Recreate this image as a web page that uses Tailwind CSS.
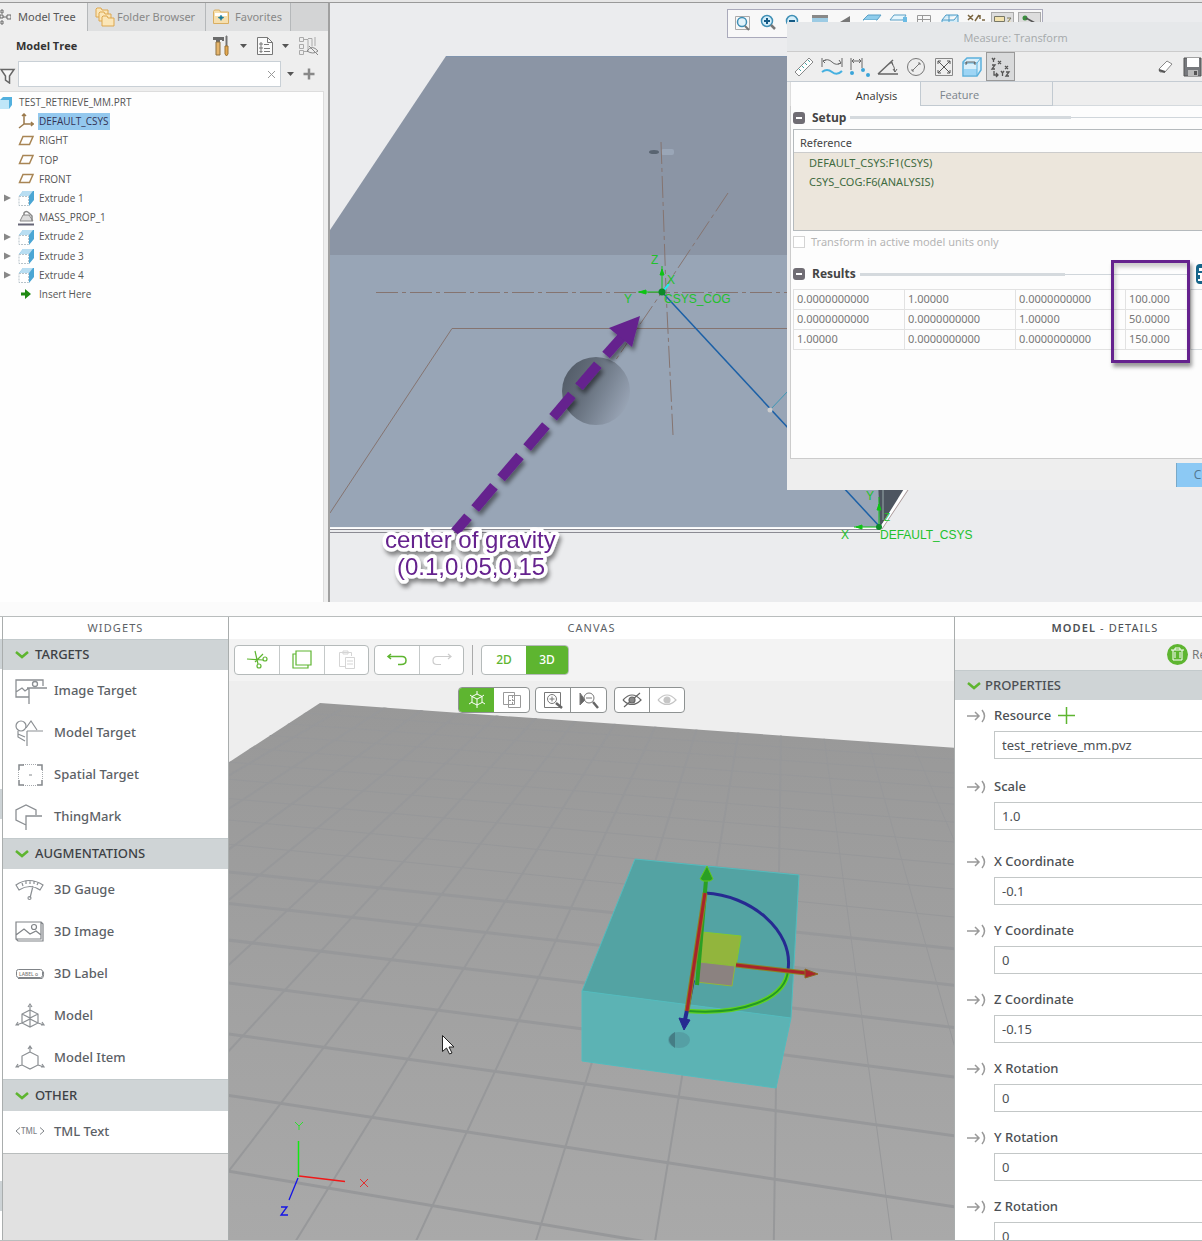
<!DOCTYPE html>
<html lang="en">
<head>
<meta charset="utf-8">
<title>Measure and place model</title>
<script src="https://cdn.jsdelivr.net/npm/@tailwindcss/browser@4"></script>
</head>
<body class="flex h-screen flex-col overflow-hidden bg-[#fbfbfb] font-['Open_Sans',sans-serif] text-[#444]">

<!-- CAD window -->
<section class="flex h-[602px] shrink-0 border-t-2 border-[#e6e6e6]">
  <aside class="flex w-[330px] shrink-0 flex-col border-t border-r-2 border-t-[#999] border-r-[#a0a0a0] bg-[#eee]">
    <div class="flex h-7 shrink-0 bg-[#d3d4d5] font-['Noto_Sans',sans-serif] text-[11px] text-[#888]">
      <button class="flex w-[87px] items-center gap-[7px] bg-[#eee] text-[#555] whitespace-nowrap">
        <svg width="11" height="16" viewBox="0 0 11 16" fill="none" stroke="#666"><path d="M1 1h2v3H1zM1 12h2v3H1zM0 6h3v3H0zM7 6h4v4H7zM3 8h4"/></svg>Model Tree</button>
      <button class="flex w-[119px] items-center gap-0.5 border-x border-[#b5b8ba] bg-[#dfe0e1] pl-[7px] whitespace-nowrap">
        <svg class="shrink-0" width="20" height="20" viewBox="0 0 20 20" fill="#fbe6b8" stroke="#dda74f"><path d="M1 2l1-1h4l1 2h6v7H1z"/><path d="M4 6l1-1h4l1 2h6v7H4z"/><path d="M7 10l1-1h4l1 2h6v8H7z"/></svg>Folder Browser</button>
      <button class="flex w-[85px] items-center gap-1.5 border-r border-[#b5b8ba] bg-[#dfe0e1] pl-[7px] whitespace-nowrap">
        <svg class="shrink-0" width="16" height="16" viewBox="0 0 16 16"><path d="M.5 2.500l1-1.500h5l1 2h8v11.500H.5z" fill="#f6dfae" stroke="#d9ae62"/><path d="M2 4h12v3H2z" fill="#fff"/><path d="M8 6l1 2 2 .5-2 1-1 2-1-2-2-1 2-.5z" fill="#157a9e" stroke="#157a9e" stroke-width=".5"/></svg>Favorites</button>
    </div>
    <div class="flex h-[30px] shrink-0 items-center gap-1 pr-2 pl-4 text-[11px] font-bold">
      <h2 class="flex-1 text-[#333]">Model Tree</h2>
      <button aria-label="Settings"><svg width="20" height="22" viewBox="0 0 20 22"><path d="M1 2h11v4h-2V5H8v2H4V5H1z" fill="#6b6b6b"/><path d="M4 7h4v13H4z" fill="#e5b46b" stroke="#8d7141"/><path d="M14 1h1v10h-1z" fill="#666" stroke="#777"/><path d="M13 11h3v8l-1.500 2-1.500-2z" fill="#e5a94f" stroke="#9b7336"/></svg></button>
      <svg class="mx-1" width="8" height="5"><path d="M0 0h7L3.500 4z" fill="#555"/></svg>
      <button aria-label="Show"><svg width="18" height="20" viewBox="0 0 18 20" fill="none" stroke="#777"><path d="M1.500 1.500h10l5 5v12h-15z" fill="#fafafa"/><path d="M11.500 1.500v5h5M4 7h2v2H4zM4 11h2v2H4zM4 15h2v1H4zM8 8.500h5M8 12.500h6M8 15.500h6"/></svg></button>
      <svg class="mx-1" width="8" height="5"><path d="M0 0h7L3.500 4z" fill="#555"/></svg>
      <button aria-label="Hide"><svg width="22" height="20" viewBox="0 0 22 20" fill="none" stroke="#aaa"><path d="M1.500 1.500h4v4h-4zM1.500 8.500h4v4h-4zM1.500 14.500h4v4h-4zM6 3.500h4v12H6M10 2.500h4v8M17 1v9"/><path d="M9 15q5-7 11 0-5 4-11 0M11 10l9 9" stroke="#888"/></svg></button>
    </div>
    <form class="flex h-[30px] shrink-0 items-center">
      <svg width="18" height="16" viewBox="0 0 18 16"><path d="M1 1.500h13L9.500 8v7l-4-3V8z" fill="#f7f7f7" stroke="#666" stroke-width="1.500"/></svg>
      <label class="mt-[-4px] flex h-[26px] w-[263px] items-center border border-[#c9d0d6] bg-white pr-1"><input aria-label="Filter" class="min-w-0 flex-1 bg-transparent px-1 text-[11px] outline-none"><svg width="9" height="9" stroke="#999"><path d="M1 1l7 7M8 1L1 8"/></svg></label>
      <svg class="mb-1 ml-1.5" width="8" height="5"><path d="M0 0h7L3.500 4z" fill="#555"/></svg>
      <svg class="mb-1 ml-2" width="12" height="12" stroke="#888" stroke-width="2.500"><path d="M6 .5v11M.5 6h11"/></svg>
    </form>
    <div class="mr-1 flex-1 border-t border-r border-[#ddd] bg-[#fefefe]">
      <ul id="tree" class="mt-px grid h-[211px] auto-rows-fr text-[10px] text-[#555]">
        <li class="flex items-center"><svg width="13" height="14" viewBox="0 0 13 14"><path d="M0 4l3-3h9v8l-3 4H0z" fill="#52b0de"/><path d="M0 4h9v9H0z" fill="#bfe6f8"/></svg><span class="ml-1.5">TEST_RETRIEVE_MM.PRT</span></li>
        <li class="flex items-center pl-[18px]"><svg width="17" height="17" viewBox="0 0 17 17" fill="none" stroke="#9b7a4c" stroke-width="1.500"><path d="M6 2v9h10M6 11l-5 4M4 3l2-2 2 2M13 9l2 2-2 2"/></svg><span class="ml-[3px] bg-[#93c8ee] px-px leading-[17px] text-[#335]">DEFAULT_CSYS</span></li>
        <li class="flex items-center pl-[18px]"><svg width="17" height="12" viewBox="0 0 17 12" fill="none" stroke="#a88554" stroke-width="1.500"><path d="M5 1.500h10l-3.500 8H1.500z"/></svg><span class="ml-1">RIGHT</span></li>
        <li class="flex items-center pl-[18px]"><svg width="17" height="12" viewBox="0 0 17 12" fill="none" stroke="#a88554" stroke-width="1.500"><path d="M5 1.500h10l-3.500 8H1.500z"/></svg><span class="ml-1">TOP</span></li>
        <li class="flex items-center pl-[18px]"><svg width="17" height="12" viewBox="0 0 17 12" fill="none" stroke="#a88554" stroke-width="1.500"><path d="M5 1.500h10l-3.500 8H1.500z"/></svg><span class="ml-1">FRONT</span></li>
        <li class="flex items-center pl-1"><svg width="31" height="16" viewBox="0 0 31 16"><path d="M0 4.500l7 3.500-7 3.500z" fill="#888"/><path d="M19 1h11v9l-5 6V6H15z" fill="#4ba6d4"/><path d="M19 1h10l-4 5H15z" fill="#b9def2"/><path d="M15 6.500h9.500v9H15z" fill="#fff" stroke="#b7c3ca" stroke-dasharray="2 1"/></svg><span class="ml-1">Extrude 1</span></li>
        <li class="flex items-center pl-[18px]"><svg width="17" height="16" viewBox="0 0 17 16"><path d="M2 11L5 5h6l4 6z" fill="#ddd" stroke="#888"/><path d="M6 5V3q2-3 5 0l3 3v5" fill="none" stroke="#888" stroke-width="1.500"/><path d="M0 14.500h16" stroke="#667" stroke-width="2"/></svg><span class="ml-1">MASS_PROP_1</span></li>
        <li class="flex items-center pl-1"><svg width="31" height="16" viewBox="0 0 31 16"><path d="M0 4.500l7 3.500-7 3.500z" fill="#888"/><path d="M19 1h11v9l-5 6V6H15z" fill="#4ba6d4"/><path d="M19 1h10l-4 5H15z" fill="#b9def2"/><path d="M15 6.500h9.500v9H15z" fill="#fff" stroke="#b7c3ca" stroke-dasharray="2 1"/></svg><span class="ml-1">Extrude 2</span></li>
        <li class="flex items-center pl-1"><svg width="31" height="16" viewBox="0 0 31 16"><path d="M0 4.500l7 3.500-7 3.500z" fill="#888"/><path d="M19 1h11v9l-5 6V6H15z" fill="#4ba6d4"/><path d="M19 1h10l-4 5H15z" fill="#b9def2"/><path d="M15 6.500h9.500v9H15z" fill="#fff" stroke="#b7c3ca" stroke-dasharray="2 1"/></svg><span class="ml-1">Extrude 3</span></li>
        <li class="flex items-center pl-1"><svg width="31" height="16" viewBox="0 0 31 16"><path d="M0 4.500l7 3.500-7 3.500z" fill="#888"/><path d="M19 1h11v9l-5 6V6H15z" fill="#4ba6d4"/><path d="M19 1h10l-4 5H15z" fill="#b9def2"/><path d="M15 6.500h9.500v9H15z" fill="#fff" stroke="#b7c3ca" stroke-dasharray="2 1"/></svg><span class="ml-1">Extrude 4</span></li>
        <li class="flex items-center pl-[18px]"><svg width="17" height="12" viewBox="0 0 17 12"><path d="M3 4.500h4V1l6 5-6 5V7.500H3z" fill="#1f8a12"/></svg><span class="ml-1">Insert Here</span></li>
      </ul>
    </div>
  </aside>

  <main class="relative min-w-0 flex-1 border-t border-[#999] bg-[#ebecee]">
    <svg class="absolute inset-0 h-full w-full" viewBox="330 3 872 599" preserveAspectRatio="xMinYMin slice" font-family="Liberation Sans, sans-serif">
      <defs>
        <linearGradient id="hole" x1="0" y1="0.200" x2="1" y2="0.700"><stop offset="0" stop-color="#515a66"/><stop offset="0.400" stop-color="#66707d"/><stop offset="1" stop-color="#9aa6b7"/></linearGradient>
        <filter id="drop" x="-20%" y="-20%" width="140%" height="150%"><feDropShadow dx="2" dy="4" stdDeviation="2" flood-color="#000" flood-opacity="0.450"/></filter>
      </defs>
      <path d="M330 230L446 56H800V256H330z" fill="#8b95a5"/>
      <path d="M330 255H800V420L880 490V527H330z" fill="#98a5b6"/>
      <path d="M446 56.500H800" stroke="#8094ad"/>
      <path d="M878 480h34l-32 47z" fill="#4d5560"/><path d="M883 480v40" stroke="#9aa"/><path d="M910 482l-28 45" stroke="#fff" stroke-width="3"/><path d="M912 484l-30 45" stroke="#a99"/>
      <path d="M330 528.500H880" stroke="#fff" stroke-width="2"/><path d="M330 529.500H880M330 532.500H880" stroke="#8b8b93"/>
      <ellipse cx="654" cy="152" rx="5" ry="2" fill="#596471"/><rect x="661" y="149" width="13" height="6" rx="2" fill="#9aa6b7"/>
      <g fill="none" stroke="#857470">
        <path d="M330 513L452 328.500H790" />
        <path d="M661 142L666 290L673 435M376 292.500H790" stroke-dasharray="22 4 4 4"/>
        <path d="M728 193L662 292L600 383" stroke-dasharray="22 4 4 4"/>
      </g>
      <circle cx="596" cy="391" r="34" fill="url(#hole)"/>
      <path d="M662 292L880 527" stroke="#1c60a6" stroke-width="1.500"/><path d="M770 410l18-19" stroke="#3c97b5"/><circle cx="770" cy="410" r="2.500" fill="#ccc"/>
      <g stroke="#0ec414" fill="#0ec414"><path d="M662 292V266M662 292H638M879 527V497M879 527H854"/><path d="M660 275l2-6 2 6zM646 290l-7 2 7 2zM877 510l2-6 2 6zM862 525l-6 2 6 2z"/></g>
      <path d="M664 290l5-6" stroke="#2ee" stroke-width="2"/><circle cx="662" cy="292" r="3.500" fill="#0c8a28"/><circle cx="879" cy="527" r="3" fill="#0c8a28"/>
      <g fill="#22c12c" font-size="12"><text x="651" y="264">Z</text><text x="667" y="284">X</text><text x="624" y="303">Y</text><text x="866" y="500">Y</text><text x="884" y="521" font-size="10">Z</text><text x="841" y="539">X</text><text x="664" y="303">CSYS_COG</text><text x="880" y="539">DEFAULT_CSYS</text></g>
      <g filter="url(#drop)"><path d="M455 532L601 361" stroke="#65228e" stroke-width="10" stroke-dasharray="29 11" stroke-dashoffset="9" fill="none"/><path d="M606 355L622 337" stroke="#65228e" stroke-width="10"/><path d="M640 316L609 328L632 347z" fill="#65228e"/></g>
      <g filter="url(#drop)" font-size="24" fill="#65228e" stroke="#fff" stroke-width="7" stroke-linejoin="round" paint-order="stroke"><text x="385" y="548">center of gravity</text><text x="397" y="575">(0.1,0,05,0,15</text></g>
    </svg>

    <div role="toolbar" aria-label="View" class="absolute top-1.5 left-[397px] flex h-[29px] w-[316px] items-start gap-1 border border-[#aab] bg-[#f8f8f8] pt-0.5 pl-[3px]">
      <button aria-label="Refit" class="size-[22px]"><svg width="22" height="22" viewBox="0 0 22 22" fill="none"><path d="M4.500 4.500h14v13h-14z" stroke="#aaa"/><circle cx="11" cy="10" r="4.500" fill="#e2f3fb" stroke="#3f8fb5" stroke-width="1.500"/><path d="M14 14l4 4" stroke="#777" stroke-width="2"/></svg></button>
      <button aria-label="Zoom in" class="size-[22px]"><svg width="22" height="22" viewBox="0 0 22 22" fill="none"><circle cx="10" cy="9" r="5.500" fill="#d6effa" stroke="#3f8fb5" stroke-width="1.500"/><path d="M10 6v6M7 9h6" stroke="#145a85" stroke-width="2"/><path d="M14 13l4 4" stroke="#777" stroke-width="2.500"/></svg></button>
      <button aria-label="Zoom out" class="size-[22px]"><svg width="22" height="22" viewBox="0 0 22 22" fill="none"><circle cx="9" cy="9" r="5.500" fill="#d6effa" stroke="#3f8fb5" stroke-width="1.500"/><path d="M6 9h6" stroke="#145a85" stroke-width="2"/></svg></button>
      <button aria-label="Repaint" class="size-[22px]"><svg width="22" height="22" viewBox="0 0 22 22"><path d="M3 4h16v13H3z" fill="#9ccbe4"/><path d="M3 3h16v3H3z" fill="#888"/></svg></button>
      <button aria-label="Rendering" class="size-[22px]"><svg width="22" height="22" viewBox="0 0 22 22"><path d="M5 10L15 4v12z" fill="#777"/></svg></button>
      <button aria-label="Style" class="size-[22px]"><svg width="22" height="22" viewBox="0 0 22 22"><path d="M7 3h13l-4 5H2z" fill="#8fcdec" stroke="#5ba0c6"/><path d="M3 8h12v9H3z" fill="#fff"/></svg></button>
      <button aria-label="Saved views" class="size-[22px]"><svg width="22" height="22" viewBox="0 0 22 22"><path d="M7 3h12l-3 5H3z" fill="#e6f6fd" stroke="#5ba0c6"/><path d="M16 5h4v8h-4z" fill="#6bbbe4"/></svg></button>
      <button aria-label="Manager" class="size-[22px]"><svg width="22" height="22" viewBox="0 0 22 22" fill="none" stroke="#999"><path d="M4.500 3.500h13v13h-13zM4 7.500h13M9.500 3v12"/></svg></button>
      <button aria-label="Perspective" class="size-[22px]"><svg width="22" height="22" viewBox="0 0 22 22" fill="#d3ecf8" stroke="#4b9ac6"><path d="M7 3h12v8l-4 5H3V8zM3 8h12l4-5M10 3v8"/></svg></button>
      <button aria-label="Datum filters" class="size-[22px]"><svg width="22" height="22" viewBox="0 0 22 22" fill="none" stroke="#7a6540" stroke-width="1.500"><path d="M3 3l5 5M8 3L3 8M10 9l4-6M15 3v4M17 8h3"/></svg></button>
      <button aria-label="Annotations" class="size-[23px] border border-[#aaa] bg-[#ddd]"><svg width="22" height="22" viewBox="0 0 22 22" fill="#f2e2ae" stroke="#776"><path d="M2.500 3.500h10v5h-10zM15 5h4l-4 5h5"/></svg></button>
      <button aria-label="Spin center" class="size-[23px] border border-[#aaa] bg-[#ddd]"><svg width="22" height="22" viewBox="0 0 22 22"><circle cx="6" cy="5" r="2.500" fill="#3a8d3d"/><path d="M7 5l9 5" stroke="#555" stroke-width="1.500"/></svg></button>
    </div>

    <!-- Measure dialog, partly outside the right edge -->
    <section role="dialog" aria-label="Measure: Transform" class="absolute top-[19px] right-0 left-[457px] flex h-[468px] flex-col overflow-hidden bg-[#eee] text-[12px]">
      <h2 class="flex h-[30px] shrink-0 items-center justify-center border-b border-[#ccc] bg-[#e6e8ea] pt-1 pl-[42px] text-[11px] text-[#a5a8aa]">Measure: Transform</h2>
      <div class="flex h-[30px] shrink-0 items-center border-b border-[#c5ccd3] pl-[3px]">
        <button aria-label="Summary" class="flex h-7 w-7 items-center justify-center"><svg width="20" height="20" viewBox="0 0 20 20" fill="#fff" stroke="#888"><path d="M1 15L15 1l4 4L5 19z"/><path d="M5 12l2 2M8 9l2 2M11 6l2 2M14 3l2 2" stroke="#4aa"/></svg></button>
        <button aria-label="Length" class="flex h-7 w-7 items-center justify-center"><svg width="22" height="20" viewBox="0 0 22 20" fill="none"><path d="M1 1v9M21 1v9M2 4q5-3 9 1t9 1M2 4l3-1M2 4l2 2M20 6l-2-3M20 6l-3 1" stroke="#666"/><path d="M1 15q5-4 10 0t10-1" stroke="#45b0e0" stroke-width="2"/></svg></button>
        <button aria-label="Distance" class="flex h-7 w-7 items-center justify-center"><svg width="22" height="20" viewBox="0 0 22 20"><path d="M2 1v12M13 1v10M3 4h9M5 2L3 4l2 2M10 2l2 2-2 2" stroke="#666" fill="none"/><g fill="#3ba4d8"><circle cx="3" cy="16" r="2"/><circle cx="14" cy="13" r="2"/><circle cx="19" cy="18" r="2"/></g></svg></button>
        <button aria-label="Angle" class="flex h-7 w-7 items-center justify-center"><svg width="22" height="20" viewBox="0 0 22 20" fill="none" stroke="#666"><path d="M1 17h20M1 17L16 3" stroke-width="1.500"/><path d="M14 5q4 5 4 10M12 7l3-2 1 3M16 12l2 3 2-3"/></svg></button>
        <button aria-label="Diameter" class="flex h-7 w-7 items-center justify-center"><svg width="20" height="20" viewBox="0 0 20 20" fill="none" stroke="#777"><circle cx="10" cy="10" r="8.500"/><path d="M6 14l8-8M6 12v2h2M12 6h2v2"/></svg></button>
        <button aria-label="Area" class="flex h-7 w-7 items-center justify-center"><svg width="20" height="20" viewBox="0 0 20 20" fill="none" stroke="#555"><path d="M1.500 1.500h17v17h-17z" stroke="#888"/><path d="M4 4l12 12M16 4L4 16M4 7V4h3M13 4h3v3M16 13v3h-3M7 16H4v-3"/></svg></button>
        <button aria-label="Volume" class="flex h-7 w-7 items-center justify-center"><svg width="20" height="20" viewBox="0 0 20 20"><path d="M5 1h14v12l-4 6H1V5z" fill="#d9effa" stroke="#5bb0dc" stroke-width="1.500"/><path d="M2 12h13v6H2z" fill="#9dd5f5"/><path d="M1 6h14l4-5M15 6v13" fill="none" stroke="#5bb0dc"/><path d="M4 8V5h9v3M4 5l1 2M13 5l-1 2" fill="none" stroke="#666"/></svg></button>
        <button aria-label="Transform" class="flex h-[29px] w-[29px] items-center justify-center border border-[#999] bg-[#d9dadb]"><svg width="22" height="22" viewBox="0 0 22 22" fill="none" stroke="#555" stroke-width="1.300"><path d="M2 2l1.500 2L5 2M3.500 4v2M8 5l3 3M11 5L8 8M2 9h3l-3 4h3M4 15v4h4M6 17l2 2-2 2M11 15l1.500 2L14 15M12.500 17v3M15 10l3 3M18 10l-3 3M16 16h3l-3 4h3"/></svg></button>
        <span class="flex-1"></span>
        <button aria-label="Clear"><svg width="18" height="16" viewBox="0 0 18 16"><path d="M3 10L11 2l5 3-7 8H4z" fill="#fff" stroke="#888"/><path d="M3 11l6 2" stroke="#555" stroke-width="2"/></svg></button>
        <button aria-label="Save" class="ml-[9px]"><svg width="19" height="20" viewBox="0 0 19 20"><path d="M1 1h17v18H1z" fill="#77797d" stroke="#555"/><path d="M4 1h12v9H4z" fill="#fff"/><path d="M5 13h10v6H5z" fill="#bbb"/><path d="M11 14h3v4h-3z" fill="#555"/></svg></button>
      </div>
      <div role="tablist" class="ml-[3px] flex h-6 shrink-0 border-l border-[#ddd]">
        <button role="tab" class="w-[129px] bg-[#fdfdfd] pt-1 pl-[42px] text-[11px] text-[#333]">Analysis</button>
        <button role="tab" class="w-[133px] border-x border-b border-[#c2cad1] pt-1 pr-[54px] text-[11px] text-[#7a838b]">Feature</button>
        <span class="flex-1 border-b border-[#d5dade]"></span>
      </div>
      <div class="ml-[3px] flex flex-1 flex-col border-b border-l border-[#ccc] bg-[#fdfdfd] pl-0.5 font-['Noto_Sans',sans-serif]">
        <div class="flex h-[23px] items-center"><span class="flex h-3 w-3 items-center justify-center rounded-[3px] bg-[#706d74]"><span class="h-0.5 w-1.5 bg-white"></span></span><h3 class="ml-[7px] font-['Open_Sans',sans-serif] text-[12px] font-bold text-[#444]">Setup</h3><span class="ml-1 h-[3px] w-[221px] bg-[#d5dade]"></span><span class="h-px flex-1 bg-[#d0d6db]"></span></div>
        <div class="h-[102px] shrink-0 border border-r-0 border-[#b5babd]">
          <h4 class="flex h-[23px] items-center border-b border-[#ccc] pt-1 pl-1.5 text-[11px] text-[#444]">Reference</h4>
          <ul class="h-[77px] bg-[#ece6dc] pl-[15px] text-[11px] leading-[19px] text-[#3f6b3f]"><li>DEFAULT_CSYS:F1(CSYS)</li><li>CSYS_COG:F6(ANALYSIS)</li></ul>
        </div>
        <label class="flex h-[22px] items-center gap-1.5 text-[11px] text-[#b5b5b5]"><input type="checkbox" disabled class="size-3 appearance-none border border-[#d4d4d4] bg-white">Transform in active model units only</label>
        <div class="mt-1.5 flex h-[30px] items-center"><span class="flex h-3 w-3 items-center justify-center rounded-[3px] bg-[#706d74]"><span class="h-0.5 w-1.5 bg-white"></span></span><h3 class="ml-[7px] font-['Open_Sans',sans-serif] text-[12px] font-bold text-[#444]">Results</h3><span class="ml-1 h-[3px] w-[205px] bg-[#d5dade]"></span><span class="h-px flex-1 bg-[#d0d6db]"></span><button aria-label="Information" class="ml-1.5 flex h-5 w-1.5 shrink-0 items-center justify-end rounded-l bg-[#15658a]"><svg width="4" height="14"><path d="M1 1h3v3H1zM0 6h4v2H0zM2 6h2v7H2zM0 12h4v2H0z" fill="#fff"/></svg></button></div>
        <table class="w-full table-fixed border-collapse border border-r-0 border-[#d5dade] text-[11px] text-[#777]">
          <colgroup><col class="w-[111px]"><col class="w-[111px]"><col class="w-[110px]"><col class="w-[65px]"><col></colgroup>
          <tr class="h-5"><td class="border border-[#e2e2e2] pl-[3px]">0.0000000000</td><td class="border border-[#e2e2e2] pl-[3px]">1.00000</td><td class="border border-[#e2e2e2] pl-[3px]">0.0000000000</td><td class="border border-[#e2e2e2] pl-[3px]">100.000</td><td></td></tr>
          <tr class="h-5"><td class="border border-[#e2e2e2] pl-[3px]">0.0000000000</td><td class="border border-[#e2e2e2] pl-[3px]">0.0000000000</td><td class="border border-[#e2e2e2] pl-[3px]">1.00000</td><td class="border border-[#e2e2e2] pl-[3px]">50.0000</td><td></td></tr>
          <tr class="h-5"><td class="border border-[#e2e2e2] pl-[3px]">1.00000</td><td class="border border-[#e2e2e2] pl-[3px]">0.0000000000</td><td class="border border-[#e2e2e2] pl-[3px]">0.0000000000</td><td class="border border-[#e2e2e2] pl-[3px]">150.000</td><td></td></tr>
        </table>
      </div>
      <footer class="flex h-[31px] shrink-0 items-center justify-end"><button class="h-6 w-[26px] border-l border-[#79a9c8] bg-[#8cc9f4] pl-4 text-[12px] text-[#52768f]">C</button></footer>
      <div class="absolute top-[238px] left-[324px] h-[103px] w-[79px] border-[3px] border-[#65228e] shadow-[2px_4px_4px_rgba(0,0,0,0.4),inset_2px_4px_4px_rgba(0,0,0,0.2)]"></div>
    </section>
  </main>
</section>

<!-- Experience editor -->
<section class="mt-3.5 flex min-h-0 flex-1 border-y border-[#b9bdbd] font-['Noto_Sans',sans-serif]">
  <div class="flex w-0.5 shrink-0 flex-col bg-white"><span class="mt-[22px] h-[30px] bg-[#cdd3d6]"></span><span class="mt-[120px] h-[30px] bg-[#cdd3d6]"></span><span class="mt-[362px] h-[30px] bg-[#cdd3d6]"></span></div>
  <nav class="flex w-[227px] shrink-0 flex-col border-x border-[#a9adad] bg-[#e1e1e1] text-[13px] font-medium text-[#5c6166]">
    <h2 class="flex h-[22px] shrink-0 items-center justify-center bg-white text-[11px] font-normal tracking-widest">WIDGETS</h2>
    <h3 class="flex h-[31px] shrink-0 items-center gap-1.5 border-t border-[#c3cacc] bg-[#cfd4d6] pl-3 text-[#3d4145]"><svg width="14" height="8" fill="none" stroke="#5eb530" stroke-width="2.500"><path d="M1 1l6 5 6-5"/></svg>TARGETS</h3>
    <ul class="bg-white">
      <li class="flex h-[42px] items-center gap-[6px] pl-3"><svg width="33" height="28" viewBox="0 0 33 28" fill="none" stroke="#8b8f93" stroke-width="1.300"><path d="M14 20H1V3h27v6M1 15l6-4 3 3 4-3M14 11v16M12 11h20"/><circle cx="20" cy="7" r="2.500"/></svg>Image Target</li>
      <li class="flex h-[42px] items-center gap-[6px] pl-3"><svg width="33" height="28" viewBox="0 0 33 28" fill="none" stroke="#8b8f93" stroke-width="1.200"><circle cx="6" cy="7" r="5"/><path d="M11 9l5-7 6 9M3 12v6l7 4M3 15l7 3M12 12h16M12 12v15"/></svg>Model Target</li>
      <li class="flex h-[42px] items-center gap-[6px] pl-3"><svg width="33" height="28" viewBox="0 0 33 28" fill="none" stroke="#a5a9ad"><path d="M8 3.500h14M8 24.500h14M3.500 9v10M27.500 9v10" stroke-dasharray="1 1"/><path d="M4 9V4h5M22 4h5v5M27 19v5h-5M9 24H4v-5" stroke="#84888c" stroke-width="1.500"/><path d="M14 14h3" stroke="#84888c"/></svg>Spatial Target</li>
      <li class="flex h-[42px] items-center gap-[6px] pl-3"><svg width="33" height="28" viewBox="0 0 33 28" fill="none" stroke="#8b8f93" stroke-width="1.300"><path d="M11 22L1 17V7l10-5 10 5v5M11 27V13h16"/></svg>ThingMark</li>
    </ul>
    <h3 class="flex h-[31px] shrink-0 items-center gap-1.5 border-t border-[#c3cacc] bg-[#cfd4d6] pl-3 text-[#3d4145]"><svg width="14" height="8" fill="none" stroke="#5eb530" stroke-width="2.500"><path d="M1 1l6 5 6-5"/></svg>AUGMENTATIONS</h3>
    <ul class="bg-white">
      <li class="flex h-[42px] items-center gap-[6px] pl-3"><svg width="33" height="28" viewBox="0 0 33 28" fill="none" stroke="#8b8f93" stroke-width="1.200"><path d="M1 9q13-9 27 0l-3 5q-10-7-21 0zM18 10l-3 12M7 7l1 3M11 5v3M15 5v3M19 5v3M23 7l-1 2"/><circle cx="14.500" cy="22" r="1.500"/></svg>3D Gauge</li>
      <li class="flex h-[42px] items-center gap-[6px] pl-3"><svg width="33" height="28" viewBox="0 0 33 28" fill="none" stroke="#808488" stroke-width="1.200"><path d="M1 4h25v17H1zM26 4l2 2v17H3l-2-2M1 17l8-6 6 5 6-3 5 4"/><circle cx="19" cy="9" r="2.500"/></svg>3D Image</li>
      <li class="flex h-[42px] items-center gap-[6px] pl-3"><svg width="33" height="28" viewBox="0 0 33 28" fill="none" stroke="#808488"><rect x="1.500" y="9.500" width="26" height="8" rx="2"/><path d="M3 18.500h24q2-1 1.500-7"/><text x="4" y="15.500" font-size="5" fill="#777" stroke="none">LABEL o</text></svg>3D Label</li>
      <li class="flex h-[42px] items-center gap-[6px] pl-3"><svg width="33" height="28" viewBox="0 0 33 28" fill="none" stroke="#8b8f93" stroke-width="1.200"><path d="M15 8l8 4v9l-8 4-8-4v-9zM7 12l8 4 8-4M15 4v21M7 21l8-4 8 4M7 21l-6 2M23 21l6 2M13 5l2-3 2 3M3 20l-2 3h3M27 20l2 3h-3"/></svg>Model</li>
      <li class="flex h-[42px] items-center gap-[6px] pl-3"><svg width="33" height="28" viewBox="0 0 33 28" fill="none" stroke="#8b8f93" stroke-width="1.200"><path d="M15 8l8 4v9l-8 4-8-4v-9zM15 8V2M7 21l-6 2M23 21l6 2M13 5l2-3 2 3M3 20l-2 3h3M27 20l2 3h-3"/></svg>Model Item</li>
    </ul>
    <h3 class="flex h-8 shrink-0 items-center gap-1.5 border-t border-[#c3cacc] bg-[#cfd4d6] pl-3 text-[#3d4145]"><svg width="14" height="8" fill="none" stroke="#5eb530" stroke-width="2.500"><path d="M1 1l6 5 6-5"/></svg>OTHER</h3>
    <ul class="border-b border-[#b9bdbd] bg-white">
      <li class="flex h-[42px] items-center gap-[6px] pl-3"><svg width="33" height="28" viewBox="0 0 33 28" fill="none" stroke="#808488"><path d="M5 9.500L1 13l4 3.500M25 9.500l4 3.500-4 3.500"/><text x="6" y="16" font-size="8" fill="#808488" stroke="none">TML</text></svg>TML Text</li>
    </ul>
  </nav>

  <main class="flex min-w-0 flex-1 flex-col bg-[#f3f3f3]">
    <h2 class="flex h-[22px] shrink-0 items-center justify-center bg-white text-[11px] tracking-widest text-[#5c6166]">CANVAS</h2>
    <div role="toolbar" aria-label="Edit" class="flex h-[42px] shrink-0 items-center gap-[5px] pl-[5px]">
      <div class="flex h-[30px] divide-x divide-[#c5c9c9] rounded border border-[#b5baba] bg-white">
        <button aria-label="Cut" class="flex w-[45px] items-center justify-center"><svg width="22" height="20" viewBox="0 0 22 20" fill="none" stroke="#5eb530" stroke-width="1.200"><circle cx="19" cy="9" r="2"/><circle cx="13" cy="16" r="2"/><path d="M1 9l16 1M9 1l3 13M9 12l8-8"/></svg></button>
        <button aria-label="Copy" class="flex w-[45px] items-center justify-center"><svg width="22" height="20" viewBox="0 0 22 20" fill="none" stroke="#5eb530" stroke-width="1.200"><path d="M5 1h15v14H5zM5 4H2v14h15v-3"/></svg></button>
        <button aria-label="Paste" class="flex w-[43px] items-center justify-center"><svg width="18" height="20" viewBox="0 0 18 20" fill="none" stroke="#d5d5d5"><path d="M7 16.500H1.500v-14h12V6M5 1h5v3H5zM7.500 7.500h9v11h-9zM9 11h6M9 14h6"/></svg></button>
      </div>
      <div class="flex h-[30px] divide-x divide-[#c5c9c9] rounded border border-[#b5baba] bg-white">
        <button aria-label="Undo" class="flex w-[45px] items-center justify-center"><svg width="22" height="14" viewBox="0 0 22 14" fill="none" stroke="#5eb530" stroke-width="1.500"><path d="M5 1L2 3.500l3 2.500M2 3.500h14q4 0 4 4t-5 4h-3"/></svg></button>
        <button aria-label="Redo" class="flex w-[43px] items-center justify-center"><svg width="20" height="14" viewBox="0 0 20 14" fill="none" stroke="#ccc" stroke-width="1.200"><path d="M16 1l3 2.500-3 2.500M19 3.500H5Q1 3.500 1 7.500t4 4h4"/></svg></button>
      </div>
      <span class="mx-[3px] h-[30px] w-px bg-[#aaa]"></span>
      <div class="flex h-[30px] overflow-hidden rounded border border-[#b5baba] bg-white text-[12px] font-medium">
        <button class="w-11 text-[#5eb530]">2D</button><button class="w-[42px] bg-[#5eb530] text-white">3D</button>
      </div>
    </div>
    <div class="relative min-h-0 flex-1 bg-[#eee]">
      <svg class="absolute inset-0 h-full w-full" viewBox="229 681 725 559" preserveAspectRatio="xMinYMin slice">
        <defs>
          <linearGradient id="floor" x1="0" y1="0" x2="0" y2="1"><stop offset="0" stop-color="#989898"/><stop offset="0.600" stop-color="#a9a9a9"/></linearGradient>
          <clipPath id="area"><path d="M229 762L320 703L954 748V1241H229z"/></clipPath>
        </defs>
        <path d="M200 781L320 703L1100 758V1600H200z" fill="url(#floor)"/>
        <g id="grid" clip-path="url(#area)" stroke="#97989a"></g>
        <path d="M635 859L799 875L791 1018L582 991z" fill="#53a3a3"/><path d="M582 991L791 1018L776 1088L582 1061z" fill="#5cb3b4"/>
        <path d="M582 991L635 859L799 875L791 1018L776 1088L582 1061zM582 991L791 1018" fill="none" stroke="#52bcbe"/>
        <ellipse cx="679" cy="1040" rx="11" ry="8" fill="#559fa4"/><path d="M675 1032q-12 7 0 16z" fill="#457d85"/>
        <path d="M702 932l39 4-5 30-39-5z" fill="#92b53d" stroke="#83c92e"/><path d="M699 962l36 4-3 20-36-4z" fill="#8b8280" stroke="#92b53d"/>
        <path d="M705 893C750 895 794 930 788 970" fill="none" stroke="#262a91" stroke-width="3"/>
        <path d="M788 970C786 1000 740 1015 688 1011" fill="none" stroke="#5fd322" stroke-width="4.500"/><path d="M788 970C786 1000 740 1015 688 1011" fill="none" stroke="#249a22" stroke-width="2"/>
        <path d="M706 880L697 985" stroke="#2a9f24" stroke-width="4"/><path d="M693 980L685 1020" stroke="#262a91" stroke-width="4"/>
        <path d="M707 866l6 13-3 2h-7l-3-2z" fill="#2a9f24" stroke="#5fc91e"/>
        <path d="M705 893L687 1011M736 965L806 973" stroke="#8d8224" stroke-width="5"/><path d="M705 893L687 1011M736 965L806 973" stroke="#a8242a" stroke-width="3"/>
        <path d="M805 969l13 5-13 4z" fill="#a8242a" stroke="#8a6a20"/><path d="M679 1018l11 2-6 10z" fill="#262a91" stroke="#262a91"/>
        <g fill="none"><path d="M298.500 1177V1141" stroke="#12e912" stroke-width="1.500"/><path d="M295 1122l4 4 4-4M299 1126v4" stroke="#2de02d"/><path d="M299 1176L345 1181.500" stroke="#f01818" stroke-width="1.300"/><path d="M360 1179l8 8M368 1179l-8 8" stroke="#e03030"/><path d="M298 1178L289 1200M281 1207h6l-6 8h7" stroke="#1414e6" stroke-width="1.300"/></g>
        <path d="M442.500 1035.500v16l4-3.500 3 6 2.500-1-3-6h5z" fill="#fff" stroke="#222"/>
      </svg>
      <div role="toolbar" aria-label="Camera" class="relative flex gap-[5px] pt-1.5 pl-[229px]">
        <div class="flex h-[26px] overflow-hidden rounded border border-[#8e9292] bg-white"><button aria-label="Perspective view" class="flex w-[35px] items-center justify-center bg-[#5eb530]"><svg width="18" height="18" viewBox="0 0 18 18" fill="none" stroke="#fff"><path d="M9 3l5 2.500v6L9 14l-5-2.500v-6zM4 5.500L9 8l5-2.500M9 8v6M9 0v3M1 13l3-2M17 13l-3-2M2 4l2 1.500M16 4l-2 1.500M9 14v3"/></svg></button><button aria-label="Flat view" class="flex w-[35px] items-center justify-center"><svg width="20" height="18" viewBox="0 0 20 18" fill="none" stroke="#999"><path d="M1.500 1.500h11v12h-11zM6.500 4.500h12v12h-12z"/><path d="M7 9.500h6M10.500 5v9" stroke-dasharray="2 1"/></svg></button></div>
        <div class="flex h-[26px] divide-x divide-[#8e9292] rounded border border-[#8e9292] bg-white"><button aria-label="Zoom all" class="flex w-[35px] items-center justify-center"><svg width="20" height="18" viewBox="0 0 20 18" fill="none" stroke="#777"><path d="M1.500 1.500h16v15h-16z"/><circle cx="9" cy="8" r="4.500"/><path d="M6.500 8h5M9 5.500v5"/><path d="M13 12l6 5" stroke="#666" stroke-width="2.500"/></svg></button><button aria-label="Zoom selected" class="flex w-[35px] items-center justify-center"><svg width="20" height="18" viewBox="0 0 20 18" fill="none" stroke="#777"><path d="M1 2v12l5-5z" fill="#666"/><circle cx="10" cy="7" r="5"/><path d="M7 7h6"/><path d="M14 11l5 6" stroke="#666" stroke-width="2.500"/></svg></button></div>
        <div class="ml-0.5 flex h-[26px] divide-x divide-[#8e9292] rounded border border-[#8e9292] bg-white"><button aria-label="Hide" class="flex w-[35px] items-center justify-center"><svg width="20" height="16" viewBox="0 0 20 16" fill="none" stroke="#666" stroke-width="1.200"><path d="M1 8q9-10 18 0-9 9-18 0M2 15L18 1"/><circle cx="10" cy="8" r="3" fill="#888"/></svg></button><button aria-label="Show" class="flex w-[34px] items-center justify-center"><svg width="20" height="16" viewBox="0 0 20 16" fill="none" stroke="#c5c5c5" stroke-width="1.200"><path d="M1 8q9-10 18 0-9 9-18 0"/><circle cx="10" cy="8" r="3" fill="#c5c5c5"/></svg></button></div>
      </div>
    </div>
  </main>

  <aside class="flex w-[248px] shrink-0 flex-col overflow-hidden border-l border-[#a9adad] bg-white text-[13px] text-[#4c5054]">
    <h2 class="flex h-[22px] shrink-0 items-center justify-center bg-white pl-[53px] text-[11px] tracking-widest whitespace-pre"><b class="font-semibold">MODEL</b> - DETAILS</h2>
    <div class="flex h-[31px] shrink-0 items-center justify-end overflow-hidden bg-[#efefef]"><button class="flex w-[35px] items-center gap-1 text-[12px] text-[#777] whitespace-nowrap"><svg class="shrink-0" width="21" height="21" viewBox="0 0 21 21"><circle cx="10.500" cy="10.500" r="10.500" fill="#5eb530"/><path d="M4 6h13M8 6V4h5v2M6 6v10h9V6M8 8v6M13 8v6" fill="none" stroke="#fff"/></svg>Re</button></div>
    <h3 class="flex h-[30px] shrink-0 items-center gap-1 border-t border-[#c3cacc] bg-[#cfd4d6] pl-3 font-medium"><svg width="14" height="8" fill="none" stroke="#5eb530" stroke-width="2.500"><path d="M1 1l6 5 6-5"/></svg>PROPERTIES</h3>
    <form id="fields" class="pl-3">
      <div class="mb-3"><label for="f0" class="flex h-[31px] items-center gap-[7px] font-medium"><svg width="20" height="14" viewBox="0 0 20 14" fill="none" stroke="#999" stroke-width="1.500"><path d="M0 7h12M8 3l4 4-4 4"/><path d="M15 1q5 6 0 12"/></svg>Resource<svg width="17" height="17" stroke="#5eb530" stroke-width="1.500"><path d="M8.500 0v17M0 8.500h17"/></svg></label><div class="pl-[27px]"><input id="f0" value="test_retrieve_mm.pvz" class="h-7 w-full border border-r-0 border-[#c3c7c7] px-[7px] outline-none"></div></div>
      <div class="mb-4"><label for="f1" class="flex h-[31px] items-center gap-[7px] font-medium"><svg width="20" height="14" viewBox="0 0 20 14" fill="none" stroke="#999" stroke-width="1.500"><path d="M0 7h12M8 3l4 4-4 4"/><path d="M15 1q5 6 0 12"/></svg>Scale</label><div class="pl-[27px]"><input id="f1" value="1.0" class="h-7 w-full border border-r-0 border-[#c3c7c7] px-[7px] outline-none"></div></div>
      <div class="mb-2.5"><label for="f2" class="flex h-[31px] items-center gap-[7px] font-medium"><svg width="20" height="14" viewBox="0 0 20 14" fill="none" stroke="#999" stroke-width="1.500"><path d="M0 7h12M8 3l4 4-4 4"/><path d="M15 1q5 6 0 12"/></svg>X Coordinate</label><div class="pl-[27px]"><input id="f2" value="-0.1" class="h-7 w-full border border-r-0 border-[#c3c7c7] px-[7px] outline-none"></div></div>
      <div class="mb-2.5"><label for="f3" class="flex h-[31px] items-center gap-[7px] font-medium"><svg width="20" height="14" viewBox="0 0 20 14" fill="none" stroke="#999" stroke-width="1.500"><path d="M0 7h12M8 3l4 4-4 4"/><path d="M15 1q5 6 0 12"/></svg>Y Coordinate</label><div class="pl-[27px]"><input id="f3" value="0" class="h-7 w-full border border-r-0 border-[#c3c7c7] px-[7px] outline-none"></div></div>
      <div class="mb-2.5"><label for="f4" class="flex h-[31px] items-center gap-[7px] font-medium"><svg width="20" height="14" viewBox="0 0 20 14" fill="none" stroke="#999" stroke-width="1.500"><path d="M0 7h12M8 3l4 4-4 4"/><path d="M15 1q5 6 0 12"/></svg>Z Coordinate</label><div class="pl-[27px]"><input id="f4" value="-0.15" class="h-7 w-full border border-r-0 border-[#c3c7c7] px-[7px] outline-none"></div></div>
      <div class="mb-2.5"><label for="f5" class="flex h-[31px] items-center gap-[7px] font-medium"><svg width="20" height="14" viewBox="0 0 20 14" fill="none" stroke="#999" stroke-width="1.500"><path d="M0 7h12M8 3l4 4-4 4"/><path d="M15 1q5 6 0 12"/></svg>X Rotation</label><div class="pl-[27px]"><input id="f5" value="0" class="h-7 w-full border border-r-0 border-[#c3c7c7] px-[7px] outline-none"></div></div>
      <div class="mb-2.5"><label for="f6" class="flex h-[31px] items-center gap-[7px] font-medium"><svg width="20" height="14" viewBox="0 0 20 14" fill="none" stroke="#999" stroke-width="1.500"><path d="M0 7h12M8 3l4 4-4 4"/><path d="M15 1q5 6 0 12"/></svg>Y Rotation</label><div class="pl-[27px]"><input id="f6" value="0" class="h-7 w-full border border-r-0 border-[#c3c7c7] px-[7px] outline-none"></div></div>
      <div><label for="f7" class="flex h-[31px] items-center gap-[7px] font-medium"><svg width="20" height="14" viewBox="0 0 20 14" fill="none" stroke="#999" stroke-width="1.500"><path d="M0 7h12M8 3l4 4-4 4"/><path d="M15 1q5 6 0 12"/></svg>Z Rotation</label><div class="pl-[27px]"><input id="f7" value="0" class="h-7 w-full border border-r-0 border-[#c3c7c7] px-[7px] outline-none"></div></div>
    </form>
  </aside>
</section>

<script>
// Perspective floor grid: both families of lines run to their vanishing points.
const grid = document.getElementById('grid');
const line = (x1, y1, x2, y2, w) => {
  const l = document.createElementNS('http://www.w3.org/2000/svg', 'line');
  Object.entries({ x1, y1, x2, y2, 'stroke-width': w }).forEach(([k, v]) => l.setAttribute(k, v));
  grid.append(l);
};
for (let n = -3; n < 14; n++) {
  const y = 440 + 1 / (0.001684 + 0.000158 * n);
  line(-4500, 370, 1200, y + (y - 370) / 4728 * 972, n < 5 ? 3 : 1);
}
for (let n = -9; n < 14; n++) {
  const x = 1 / (0.0002073 - 0.00000355 * n) - 4500;
  const y = 370 + (x + 4500) * 0.1404;
  const t = 2;
  line(785, 448, 785 + (x - 785) * t, 448 + (y - 448) * t, n < 6 ? 2 : 1);
}
</script>
</body>
</html>
